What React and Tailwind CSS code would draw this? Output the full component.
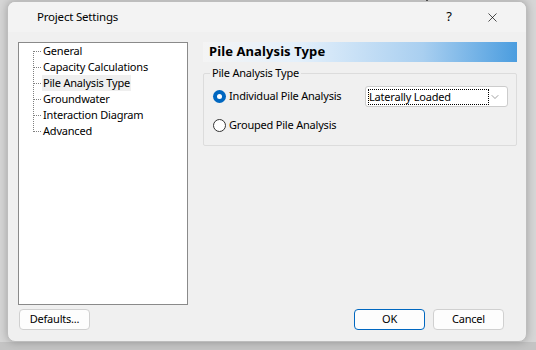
import { ChevronDown, X } from 'lucide-react'

const tree = ['General', 'Capacity Calculations', 'Pile Analysis Type', 'Groundwater', 'Interaction Diagram', 'Advanced']

export default function App() {
  return (
    <div className="relative w-[536px] h-[350px] overflow-hidden bg-[#d6d6d6] text-[11px] tracking-[-0.2px] text-black" style={{ fontFamily: '"Noto Sans", "Segoe UI", sans-serif' }}>
      <div className="absolute left-[426px] top-0 w-[2px] h-full bg-[#555]" />
      <div className="absolute left-0 right-0 bottom-0 h-[8px] bg-[#c4c4c4]" />
      <div className="relative ml-[7px] mt-[1px] w-[520px] h-[341px] rounded-[8px] bg-[#f0f0f0] border border-[#bdbdbd] shadow-[0_0_8px_rgba(0,0,0,0.25)] flex flex-col overflow-hidden">
        {/* title bar */}
        <div className="h-[30px] bg-[#f3f3f3] flex items-center pl-[29px] shrink-0">
          <span className="text-[11.5px] -mt-[1px]">Project Settings</span>
          <span className="ml-auto mr-[3px] w-[40px] text-center text-[13px]">?</span>
          <span className="w-[40px] mr-[14px] flex justify-center"><X size={15} strokeWidth={1.1} /></span>
        </div>

        <div className="flex flex-1 pl-[10px] pt-[10px] pr-[9px]">
          {/* tree */}
          <div className="w-[170px] h-[263px] bg-white border border-[#8a8a8a]">
            <div className="relative pl-[14px]">
              <div className="absolute left-[14px] top-[8px] h-[81px] border-l border-dotted border-[#808080]" />
              {tree.map((t, i) => (
                <div key={t} className="h-[16px] flex items-center">
                  <span className="w-[8px] border-t border-dotted border-[#808080] mr-[1px]" />
                  <span className={'px-[1px] leading-[16px] ' + (i === 2 ? 'bg-[#efefef]' : '')}>{t}</span>
                </div>
              ))}
            </div>
          </div>

          {/* right pane */}
          <div className="flex-1 ml-[15px]">
            <div className="h-[20px] flex items-center pl-[6px] font-bold text-[13px] tracking-[0.1px] bg-[linear-gradient(to_right,#f4f4f4_0%,#e4f0fb_30%,#a9cff0_70%,#4b9ddf_100%)]">
              Pile Analysis Type
            </div>
            <div className="relative mt-[11px] h-[73px] border border-[#dcdcdc] rounded-[2px]">
              <span className="absolute left-[6px] -top-[9px] px-[2px] bg-[#f0f0f0] leading-[16px]">Pile Analysis Type</span>
              <div className="flex items-center mt-[12px] pl-[9px]">
                <span className="w-[13px] h-[13px] rounded-full bg-[#0067c0] flex items-center justify-center">
                  <span className="w-[5px] h-[5px] rounded-full bg-white" />
                </span>
                <span className="ml-[3px]">Individual Pile Analysis</span>
                <div className="ml-auto mr-[8px] w-[143px] h-[21px] bg-white border border-[#cccccc] rounded-[3px] flex items-center pl-[2px] pr-[6px]">
                  <span className="w-[121px] h-[16px] border border-dotted border-black flex items-center leading-[14px]">Laterally Loaded</span>
                  <ChevronDown className="ml-auto text-[#606060]" size={12} strokeWidth={1.2} />
                </div>
              </div>
              <div className="flex items-center mt-[10px] pl-[9px]">
                <span className="w-[13px] h-[13px] rounded-full border border-[#333] bg-white" />
                <span className="ml-[3px]">Grouped Pile Analysis</span>
              </div>
            </div>
          </div>
        </div>

        {/* footer */}
        <div className="flex items-center pl-[11px] pr-[22px] pb-[11px]">
          <button className="w-[71px] h-[21px] bg-[#fdfdfd] border border-[#d0d0d0] rounded-[4px]">Defaults...</button>
          <button className="ml-auto w-[71px] h-[21px] bg-[#fdfdfd] border border-[#0067c0] rounded-[4px]">OK</button>
          <button className="ml-[8px] w-[71px] h-[21px] bg-[#fdfdfd] border border-[#d0d0d0] rounded-[4px]">Cancel</button>
        </div>
      </div>
    </div>
  )
}
